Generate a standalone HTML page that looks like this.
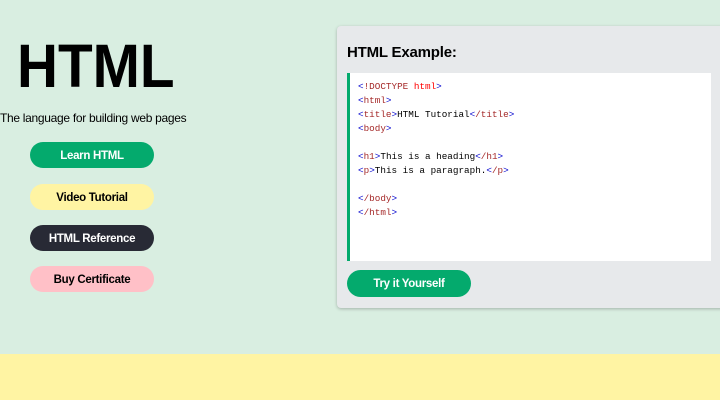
<!DOCTYPE html>
<html><head><style>
*{margin:0;padding:0;box-sizing:border-box}
body{width:720px;height:400px;overflow:hidden;background:#d9eee1;font-family:"Liberation Sans",sans-serif;position:relative}
.h{position:absolute;left:17px;top:31px;font-size:61px;font-weight:bold;color:#000;transform:scaleX(0.93);transform-origin:left;line-height:70px}
.sub{position:absolute;left:0;top:111px;font-size:12px;color:#000;letter-spacing:-0.3px}
.btn{position:absolute;left:30px;width:124px;height:26px;border-radius:13px;font-size:11.5px;font-weight:bold;text-align:center;line-height:28px;letter-spacing:-0.3px}
.panel{position:absolute;left:337px;top:26px;width:390px;height:282px;background:#e7e9eb;border-radius:4px;box-shadow:0 1px 3px rgba(0,0,0,.25)}
.panel h3{position:absolute;left:10px;top:18px;font-size:15px;color:#000;letter-spacing:-0.2px}
.code{position:absolute;left:10px;top:47px;width:364px;height:188px;background:#fff;border-left:3px solid #04aa6d;font-family:"Liberation Mono",monospace;font-size:9.3px;line-height:14px;padding:7px 0 0 8px;color:#000;white-space:pre}
.b{color:#0000cd}.t{color:#a52a2a}.r{color:#ff0000}
.try{position:absolute;left:10px;top:244px;width:124px;height:27px;border-radius:14px;background:#04aa6d;color:#fff;font-size:11.5px;font-weight:bold;text-align:center;line-height:29px;letter-spacing:-0.3px}
.band{position:absolute;left:0;top:354px;width:720px;height:46px;background:#fff4a3}
</style></head><body>
<div class="h">HTML</div>
<div class="sub">The language for building web pages</div>
<div class="btn" style="top:142px;background:#04aa6d;color:#fff">Learn HTML</div>
<div class="btn" style="top:184px;background:#fff4a3;color:#000">Video Tutorial</div>
<div class="btn" style="top:225px;background:#282a35;color:#fff">HTML Reference</div>
<div class="btn" style="top:266px;background:#ffc0c7;color:#000">Buy Certificate</div>
<div class="panel">
<h3>HTML Example:</h3>
<div class="code"><span class="b">&lt;</span><span class="t">!DOCTYPE</span> <span class="r">html</span><span class="b">&gt;</span>
<span class="b">&lt;</span><span class="t">html</span><span class="b">&gt;</span>
<span class="b">&lt;</span><span class="t">title</span><span class="b">&gt;</span>HTML Tutorial<span class="b">&lt;</span><span class="t">/title</span><span class="b">&gt;</span>
<span class="b">&lt;</span><span class="t">body</span><span class="b">&gt;</span>

<span class="b">&lt;</span><span class="t">h1</span><span class="b">&gt;</span>This is a heading<span class="b">&lt;</span><span class="t">/h1</span><span class="b">&gt;</span>
<span class="b">&lt;</span><span class="t">p</span><span class="b">&gt;</span>This is a paragraph.<span class="b">&lt;</span><span class="t">/p</span><span class="b">&gt;</span>

<span class="b">&lt;</span><span class="t">/body</span><span class="b">&gt;</span>
<span class="b">&lt;</span><span class="t">/html</span><span class="b">&gt;</span></div>
<div class="try">Try it Yourself</div>
</div>
<div class="band"></div>
</body></html>
